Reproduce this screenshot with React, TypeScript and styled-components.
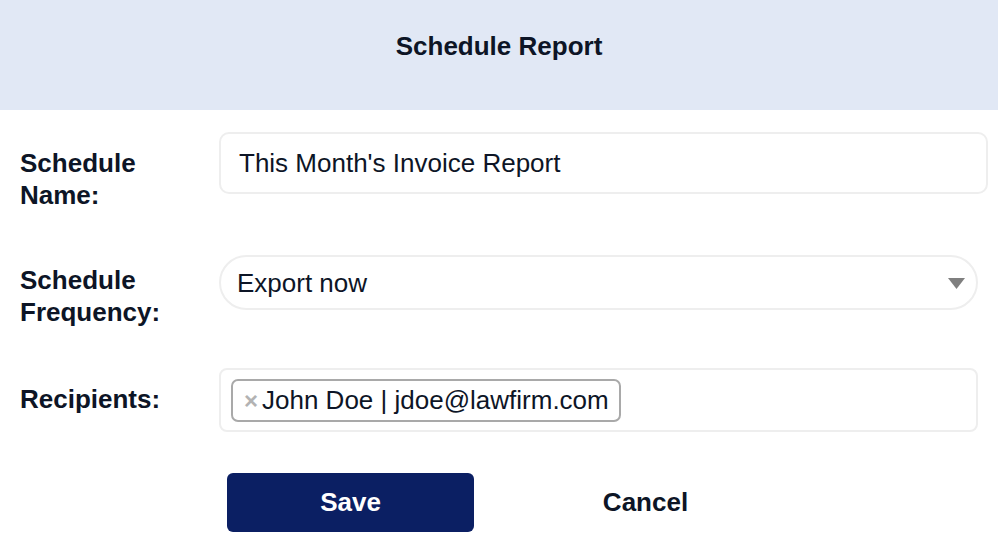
import React, { useState } from 'react';
import styled, { createGlobalStyle } from 'styled-components';

const GlobalStyle = createGlobalStyle`
  body {
    margin: 0;
    background: #ffffff;
    font-family: "Liberation Sans", Arial, Helvetica, sans-serif;
    color: #0d1526;
  }
  * {
    box-sizing: border-box;
  }
`;

const Page = styled.div`
  width: 100%;
  min-height: 100vh;
  display: flex;
  flex-direction: column;
`;

const Header = styled.header`
  height: 110px;
  background-color: #e1e8f5;
  display: flex;
  justify-content: center;
  padding-top: 30px;
`;

const Title = styled.h1`
  margin: 0;
  font-size: 26px;
  line-height: 32px;
  font-weight: 700;
  color: #0d1526;
`;

const Form = styled.form`
  display: flex;
  flex-direction: column;
  padding: 22px 20px 0 20px;
`;

const Row = styled.div<{ $gap: number }>`
  display: grid;
  grid-template-columns: 199px 1fr;
  align-items: start;
  margin-bottom: ${(p) => p.$gap}px;
`;

const Label = styled.label<{ $offset: number }>`
  font-size: 26px;
  line-height: 32px;
  font-weight: 700;
  padding-top: ${(p) => p.$offset}px;
  color: #0d1526;
`;

const TextInput = styled.input`
  width: calc(100% + 10px);
  height: 62px;
  border: 2px solid #eeeeee;
  border-radius: 10px;
  padding: 0 18px;
  font-family: inherit;
  font-size: 26px;
  color: #0d1526;
  background: #ffffff;
  outline: none;
`;

const SelectWrap = styled.div`
  position: relative;
  height: 55px;
`;

const Select = styled.select`
  width: 100%;
  height: 100%;
  appearance: none;
  -webkit-appearance: none;
  border: 2px solid #eeeeee;
  border-radius: 28px;
  padding: 0 50px 0 16px;
  font-family: inherit;
  font-size: 26px;
  color: #0d1526;
  background: #ffffff;
  outline: none;
`;

const Arrow = styled.svg`
  position: absolute;
  right: 13px;
  top: 23px;
  pointer-events: none;
`;

const TagBox = styled.div`
  height: 64px;
  border: 2px solid #eeeeee;
  border-radius: 8px;
  padding: 10px 10px;
  display: flex;
  align-items: center;
  gap: 8px;
`;

const Tag = styled.span`
  display: inline-flex;
  align-items: center;
  height: 43px;
  border: 2px solid #a9a9a9;
  border-radius: 7px;
  padding: 0 10px 0 11px;
  font-size: 26px;
  color: #0d1526;
  gap: 4px;
`;

const TagRemove = styled.button`
  border: none;
  background: none;
  padding: 0;
  font-family: inherit;
  font-size: 24px;
  font-weight: 700;
  color: #b3b3b3;
  cursor: pointer;
  line-height: 1;
  margin-top: 1px;
`;

const Actions = styled.div`
  display: flex;
  gap: 48px;
  padding-left: 207px;
  margin-top: 41px;
`;

const Button = styled.button<{ $primary?: boolean }>`
  width: 247px;
  height: 59px;
  border: none;
  border-radius: 6px;
  font-family: inherit;
  font-size: 26px;
  font-weight: 700;
  cursor: pointer;
  background: ${(p) => (p.$primary ? '#0b1f63' : 'transparent')};
  color: ${(p) => (p.$primary ? '#ffffff' : '#0d1526')};
`;

export default function App() {
  const [name, setName] = useState("This Month's Invoice Report");
  const [frequency, setFrequency] = useState('now');
  const [recipients, setRecipients] = useState(['John Doe | jdoe@lawfirm.com']);

  return (
    <Page>
      <GlobalStyle />
      <Header>
        <Title>Schedule Report</Title>
      </Header>
      <Form onSubmit={(e) => e.preventDefault()}>
        <Row $gap={44}>
          <Label $offset={15}>Schedule Name:</Label>
          <TextInput value={name} onChange={(e) => setName(e.target.value)} />
        </Row>
        <Row $gap={40}>
          <Label $offset={9}>Schedule Frequency:</Label>
          <SelectWrap>
            <Select value={frequency} onChange={(e) => setFrequency(e.target.value)}>
              <option value="now">Export now</option>
              <option value="daily">Daily</option>
              <option value="weekly">Weekly</option>
              <option value="monthly">Monthly</option>
            </Select>
            <Arrow width="17" height="11" viewBox="0 0 17 11">
              <path d="M0 0 H17 L8.5 11 Z" fill="#7f7f7f" />
            </Arrow>
          </SelectWrap>
        </Row>
        <Row $gap={0}>
          <Label $offset={15}>Recipients:</Label>
          <TagBox>
            {recipients.map((r) => (
              <Tag key={r}>
                <TagRemove
                  type="button"
                  onClick={() => setRecipients(recipients.filter((x) => x !== r))}
                >
                  ×
                </TagRemove>
                {r}
              </Tag>
            ))}
          </TagBox>
        </Row>
        <Actions>
          <Button $primary type="submit">Save</Button>
          <Button type="button">Cancel</Button>
        </Actions>
      </Form>
    </Page>
  );
}
